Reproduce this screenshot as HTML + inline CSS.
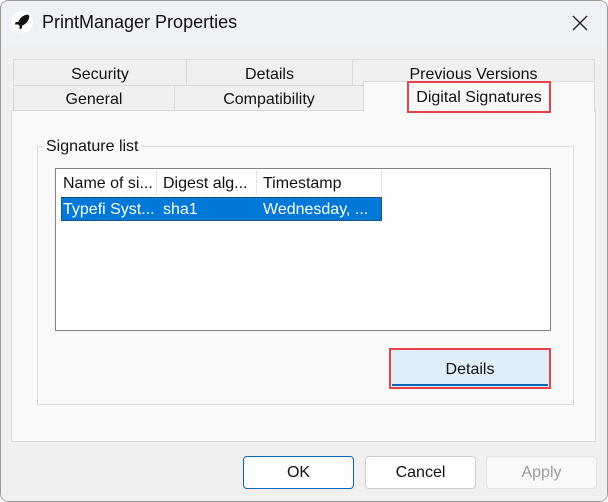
<!DOCTYPE html><html><head><style>
*{box-sizing:border-box;margin:0;padding:0}
body{width:608px;height:502px;background:#fff;font-family:"Liberation Sans",sans-serif;font-size:16px;color:#111;position:relative;overflow:hidden}
.win{position:absolute;left:0;top:0;width:608px;height:502px;border-radius:8px;background:#f0f0f0;overflow:hidden}
.frame{position:absolute;left:0;top:0;width:608px;height:502px;border:1px solid #9a9a9a;border-radius:8px}
.title{position:absolute;left:0;top:0;width:608px;height:44px;background:#eef2f7}
.a{position:absolute}
.tab{position:absolute;border:1px solid #dadada;background:#f0f0f0;text-align:center;font-size:16px}
.btn{position:absolute;border:1px solid #cfcfcf;border-radius:4px;background:#fdfdfd;text-align:center;line-height:32px;font-size:16px}
</style></head><body><div class="win">
<div class="title"></div>
<svg class="a" style="left:11px;top:11px" width="22" height="22" viewBox="0 0 18 18"><circle cx="9" cy="9" r="9" fill="#fff"/><path d="M14 3 C10 3 7 6 6 9 L4 9 L3 11 L6 11 L7 12 L7 15 L9 14 L9 12 C12 11 15 8 15 4 Z" fill="#111"/></svg>
<div class="a" style="left:42px;top:12px;font-size:18px">PrintManager Properties</div>
<svg class="a" style="left:572px;top:15px" width="16" height="16" viewBox="0 0 16 16"><path d="M1 1L15 15M15 1L1 15" stroke="#222" stroke-width="1.4"/></svg>
<div class="a" style="left:11px;top:110px;width:585px;height:332px;background:#f9f9f9;border:1px solid #dadada"></div>
<div class="tab" style="left:13px;top:59px;width:174px;height:27px;line-height:29px">Security</div>
<div class="tab" style="left:186px;top:59px;width:167px;height:27px;line-height:29px">Details</div>
<div class="tab" style="left:352px;top:59px;width:243px;height:27px;line-height:30px">Previous Versions</div>
<div class="tab" style="left:13px;top:85px;width:162px;height:26px;line-height:28px">General</div>
<div class="tab" style="left:174px;top:85px;width:190px;height:26px;line-height:28px">Compatibility</div>
<div class="tab" style="left:363px;top:81px;width:232px;height:31px;background:#f9f9f9;border-bottom:none"></div>
<div class="a" style="left:407px;top:81px;width:144px;height:32px;border:2px solid #e8414a;text-align:center;line-height:29px">Digital Signatures</div>
<div class="a" style="left:37px;top:146px;width:537px;height:259px;border:1px solid #dcdcdc"></div>
<div class="a" style="left:43px;top:138px;background:#f9f9f9;padding:0 3px">Signature list</div>
<div class="a" style="left:55px;top:168px;width:496px;height:163px;border:1px solid #838383;background:#fff"></div>
<div class="a" style="left:57px;top:170px;width:100px;height:26px;border-right:1px solid #e5e5e5;padding:5px 0 0 6px">Name of si...</div>
<div class="a" style="left:157px;top:170px;width:100px;height:26px;border-right:1px solid #e5e5e5;padding:5px 0 0 6px">Digest alg...</div>
<div class="a" style="left:257px;top:170px;width:125px;height:26px;border-right:1px solid #e5e5e5;padding:5px 0 0 6px">Timestamp</div>
<div class="a" style="left:61px;top:197px;width:321px;height:24px;background:#0078d7;border:1px dotted #333;color:#fff"></div>
<div class="a" style="left:63px;top:201px;color:#fff">Typefi Syst...</div>
<div class="a" style="left:163px;top:201px;color:#fff">sha1</div>
<div class="a" style="left:263px;top:201px;color:#fff">Wednesday, ...</div>
<div class="a" style="left:389px;top:348px;width:162px;height:41px;border:2px solid #e8414a;background:#e0eef9;text-align:center;line-height:39px"><div style="position:absolute;left:1px;right:1px;bottom:1px;height:2px;background:#0a64b8"></div>Details</div>
<div class="btn" style="left:243px;top:456px;width:111px;height:33px;border-color:#0a64b8">OK</div>
<div class="btn" style="left:365px;top:456px;width:111px;height:33px">Cancel</div>
<div class="btn" style="left:486px;top:456px;width:111px;height:33px;color:#9b9b9b;background:#f9f9f9;border-color:#e3e3e3">Apply</div>
<div class="frame"></div>
</div></body></html>
